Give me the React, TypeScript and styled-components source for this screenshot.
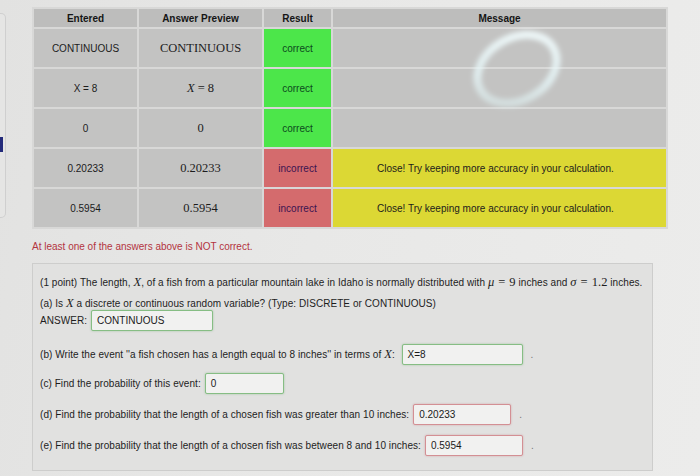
import React from "react";
import styled, { createGlobalStyle, css } from "styled-components";

const GlobalStyle = createGlobalStyle`
  html, body { margin: 0; padding: 0; }
  body {
    width: 700px;
    height: 476px;
    overflow: hidden;
    background: linear-gradient(100deg, #e2e2e1 0%, #e8e8e7 45%, #ececeb 100%);
    font-family: "Liberation Sans", Arial, sans-serif;
    color: #1f1f1f;
  }
`;

const Page = styled.div`
  display: grid;
  grid-template-columns: 6px 626px;
  column-gap: 26px;
  padding-top: 7px;
  height: 469px;
`;

const SidePanel = styled.div`
  margin-top: 6px;
  height: 205px;
  box-sizing: border-box;
  background: #e5e5e4;
  border: 1px solid #cfcfcf;
  border-left: none;
  border-radius: 0 5px 5px 0;
  display: flex;
  flex-direction: column;
  padding-top: 123px;
`;

const SideMarker = styled.div`
  width: 3px;
  height: 15px;
  background: #232a7a;
`;

const Main = styled.div`
  display: flex;
  flex-direction: column;
`;

const TableWrap = styled.div`
  position: relative;
`;

const Table = styled.table`
  width: 626px;
  border-collapse: collapse;
  table-layout: fixed;
  border: 1px solid #a9a9a9;
`;

const HeadCell = styled.th<{ $w: number }>`
  width: ${(p) => p.$w}px;
  height: 18px;
  padding: 0;
  background: #bdbdbc;
  border: 2px solid #d8d8d7;
  font: bold 10px "Liberation Sans", Arial, sans-serif;
  color: #151515;
  text-align: center;
  vertical-align: middle;
`;

type Tone = "plain" | "correct" | "incorrect" | "close";

const toneStyles: Record<Tone, ReturnType<typeof css>> = {
  plain: css`
    background: #c3c3c2;
    color: #1c1c1c;
  `,
  correct: css`
    background: #4ce64a;
    color: #0d4a1e;
  `,
  incorrect: css`
    background: #d46b6d;
    color: #3a1350;
  `,
  close: css`
    background: #dcd834;
    color: #1c1c1c;
  `,
};

const Cell = styled.td<{ $tone?: Tone; $align?: "center" | "left"; $serif?: boolean }>`
  height: 38px;
  padding: 0;
  border: 2px solid #d8d8d7;
  text-align: ${(p) => p.$align ?? "center"};
  padding-left: ${(p) => (p.$align === "left" ? "44px" : "0")};
  vertical-align: middle;
  font-family: ${(p) =>
    p.$serif ? `"Liberation Serif", "Times New Roman", serif` : `"Liberation Sans", Arial, sans-serif`};
  font-size: ${(p) => (p.$serif ? "12.5px" : "10px")};
  ${(p) => toneStyles[p.$tone ?? "plain"]}
`;

const MathVar = styled.i`
  font-family: "Liberation Serif", "Times New Roman", serif;
  font-style: italic;
  font-size: 12.5px;
`;

const MathNum = styled.span`
  font-family: "Liberation Serif", "Times New Roman", serif;
  font-size: 12.5px;
`;

const Eq = styled.span`
  font-family: "Liberation Serif", "Times New Roman", serif;
  font-size: 12.5px;
  margin: 0 4px;
`;

const Glare = styled.svg`
  position: absolute;
  left: 425px;
  top: 12px;
  pointer-events: none;
`;

const Warning = styled.div`
  margin-top: 12px;
  font-size: 10px;
  line-height: 12px;
  color: #b3343f;
`;

const ProblemBox = styled.div`
  margin-top: 10px;
  width: 621px;
  box-sizing: border-box;
  background: #e1e1e0;
  border: 1px solid #cdcdcc;
  padding: 12px 0 14px 7px;
  display: flex;
  flex-direction: column;
  font-size: 10px;
  letter-spacing: 0.06px;
  color: #1d1d1d;
`;

const TextLine = styled.div<{ $mt?: number }>`
  line-height: 12px;
  margin-top: ${(p) => p.$mt ?? 0}px;
  white-space: nowrap;
`;

const Row = styled.div<{ $mt?: number }>`
  display: flex;
  align-items: center;
  height: 21px;
  margin-top: ${(p) => p.$mt ?? 0}px;
  white-space: nowrap;
`;

const AnswerInput = styled.div<{ $w: number; $ok: boolean }>`
  box-sizing: border-box;
  width: ${(p) => p.$w}px;
  height: 21px;
  margin-left: 4px;
  padding-left: 5px;
  display: flex;
  align-items: center;
  background: #f1f1f0;
  border: 1.5px solid ${(p) => (p.$ok ? "#86bd84" : "#d38f94")};
  border-radius: 2px;
  box-shadow: 0 0 2px ${(p) => (p.$ok ? "rgba(90,170,90,0.5)" : "rgba(200,90,100,0.45)")};
  font-size: 10px;
  letter-spacing: 0;
  color: #1a1a1a;
`;

const Period = styled.span`
  margin-left: 8px;
  color: #777;
`;

const rows: { entered: React.ReactNode; preview: React.ReactNode; ok: boolean }[] = [
  { entered: "CONTINUOUS", preview: "CONTINUOUS", ok: true },
  {
    entered: "X = 8",
    preview: (
      <>
        <MathVar>X</MathVar> = 8
      </>
    ),
    ok: true,
  },
  { entered: "0", preview: "0", ok: true },
  { entered: "0.20233", preview: "0.20233", ok: false },
  { entered: "0.5954", preview: "0.5954", ok: false },
];

const CLOSE = "Close! Try keeping more accuracy in your calculation.";

export default function App() {
  return (
    <>
      <GlobalStyle />
      <Page>
        <SidePanel>
          <SideMarker />
        </SidePanel>
        <Main>
          <TableWrap>
            <Table>
              <thead>
                <tr>
                  <HeadCell $w={103}>Entered</HeadCell>
                  <HeadCell $w={123}>Answer Preview</HeadCell>
                  <HeadCell $w={67}>Result</HeadCell>
                  <HeadCell $w={333}>Message</HeadCell>
                </tr>
              </thead>
              <tbody>
                {rows.map((r, i) => (
                  <tr key={i}>
                    <Cell>{r.entered}</Cell>
                    <Cell $serif>{r.preview}</Cell>
                    <Cell $tone={r.ok ? "correct" : "incorrect"}>{r.ok ? "correct" : "incorrect"}</Cell>
                    <Cell $tone={r.ok ? "plain" : "close"} $align="left">
                      {r.ok ? "" : CLOSE}
                    </Cell>
                  </tr>
                ))}
              </tbody>
            </Table>
            <Glare width="130" height="100" viewBox="0 0 130 100">
              <defs>
                <filter id="blur" x="-20%" y="-20%" width="140%" height="140%">
                  <feGaussianBlur stdDeviation="2.8" />
                </filter>
                <linearGradient id="fade" x1="1" y1="0" x2="0" y2="1">
                  <stop offset="0" stopColor="#f4fcfd" stopOpacity="0.95" />
                  <stop offset="0.6" stopColor="#e6f6f8" stopOpacity="0.8" />
                  <stop offset="1" stopColor="#dcefef" stopOpacity="0.45" />
                </linearGradient>
              </defs>
              <ellipse
                cx="60"
                cy="50"
                rx="42"
                ry="31"
                transform="rotate(-30 60 50)"
                fill="none"
                stroke="url(#fade)"
                strokeWidth="8"
                filter="url(#blur)"
              />
            </Glare>
          </TableWrap>

          <Warning>At least one of the answers above is NOT correct.</Warning>

          <ProblemBox>
            <TextLine>
              (1 point) The length, <MathVar>X</MathVar>, of a fish from a particular mountain lake in Idaho is
              normally distributed with <MathVar>μ</MathVar>
              <Eq>=</Eq>
              <MathNum>9</MathNum> inches and <MathVar>σ</MathVar>
              <Eq>=</Eq>
              <MathNum>1.2</MathNum> inches.
            </TextLine>
            <TextLine $mt={8}>
              (a) Is <MathVar>X</MathVar> a discrete or continuous random variable? (Type: DISCRETE or CONTINUOUS)
            </TextLine>
            <Row>
              ANSWER:
              <AnswerInput $w={122} $ok>
                CONTINUOUS
              </AnswerInput>
            </Row>
            <Row $mt={13}>
              (b) Write the event ''a fish chosen has a length equal to 8 inches'' in terms of&nbsp;
              <MathVar>X</MathVar>:&nbsp;
              <AnswerInput $w={121} $ok>
                X=8
              </AnswerInput>
              <Period>.</Period>
            </Row>
            <Row $mt={8}>
              (c) Find the probability of this event:
              <AnswerInput $w={79} $ok>
                0
              </AnswerInput>
            </Row>
            <Row $mt={10}>
              (d) Find the probability that the length of a chosen fish was greater than 10 inches:
              <AnswerInput $w={98} $ok={false}>
                0.20233
              </AnswerInput>
              <Period>.</Period>
            </Row>
            <Row $mt={10}>
              (e) Find the probability that the length of a chosen fish was between 8 and 10 inches:
              <AnswerInput $w={98} $ok={false}>
                0.5954
              </AnswerInput>
              <Period>.</Period>
            </Row>
          </ProblemBox>
        </Main>
      </Page>
    </>
  );
}
